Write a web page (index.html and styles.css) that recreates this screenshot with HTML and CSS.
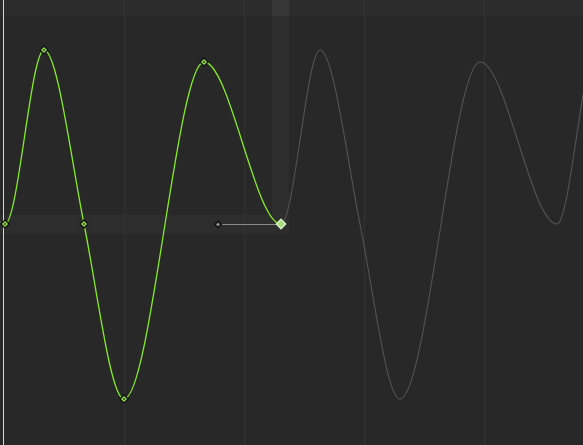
FILE: index.html
```html
<!DOCTYPE html>
<html>
<head>
  <title>Curve Editor</title>
  <link rel="stylesheet" href="styles.css">
</head>
<body>
  <div class="curve-editor">
    <svg class="curve-canvas" width="583" height="445" viewBox="0 0 583 445">
      <!-- timeline strip -->
      <rect class="ruler" x="0" y="0" width="583" height="16"/>

      <!-- selected key cross-hair bands -->
      <rect class="band" x="0" y="215" width="272" height="19"/>
      <rect class="band" x="272" y="16" width="17" height="218"/>
      <rect class="band-top" x="272" y="0" width="17" height="16"/>

      <!-- grid -->
      <g class="grid">
        <line x1="124.5" y1="0" x2="124.5" y2="445"/>
        <line x1="244.5" y1="0" x2="244.5" y2="445"/>
        <line x1="364.5" y1="0" x2="364.5" y2="445"/>
        <line x1="484.5" y1="0" x2="484.5" y2="445"/>
      </g>
      <line class="start-line" x1="3.5" y1="0" x2="3.5" y2="445"/>

      <!-- looped copies of the curve -->
      <g class="ghost">
        <path d="M-271 224 C-258 224 -245 50 -232 50 C-218.7 50 -205.3 157 -192 224 C-178.7 290.7 -165.3 399 -152 399 C-125.3 399 -98.7 62 -72 62 C-46.3 62 -20.7 224 5 224"/>
        <path d="M281 224 C294 224 307 50 320 50 C333.3 50 346.7 157 360 224 C373.3 290.7 386.7 399 400 399 C426.7 399 453.3 62 480 62 C505.7 62 531.3 224 557 224"/>
        <path d="M557 224 C570 224 583 50 596 50"/>
      </g>

      <!-- curve -->
      <path class="curve" d="M5 224 C18 224 31 50 44 50 C57.3 50 70.7 157 84 224 C97.3 290.7 110.7 399 124 399 C150.7 399 177.3 62 204 62 C229.7 62 255.3 224 281 224"/>

      <!-- tangent handle -->
      <line class="handle-line" x1="218" y1="224.5" x2="281" y2="224.5"/>
      <g class="handle" transform="translate(218 224.5)">
        <rect x="-3" y="-3" width="6" height="6" transform="rotate(45)" class="key-edge"/>
        <rect x="-1.5" y="-1.5" width="3" height="3" transform="rotate(45)" class="handle-fill"/>
      </g>

      <!-- keys -->
      <g class="key" transform="translate(5 224)"><rect x="-3.5" y="-3.5" width="7" height="7" transform="rotate(45)" class="key-edge"/><rect x="-2.2" y="-2.2" width="4.4" height="4.4" transform="rotate(45)" class="key-fill"/><circle r="1" class="key-dot"/></g>
      <g class="key" transform="translate(44 50)"><rect x="-3.5" y="-3.5" width="7" height="7" transform="rotate(45)" class="key-edge"/><rect x="-2.2" y="-2.2" width="4.4" height="4.4" transform="rotate(45)" class="key-fill"/><circle r="1" class="key-dot"/></g>
      <g class="key" transform="translate(84 224)"><rect x="-3.5" y="-3.5" width="7" height="7" transform="rotate(45)" class="key-edge"/><rect x="-2.2" y="-2.2" width="4.4" height="4.4" transform="rotate(45)" class="key-fill"/><circle r="1" class="key-dot"/></g>
      <g class="key" transform="translate(124 399)"><rect x="-3.5" y="-3.5" width="7" height="7" transform="rotate(45)" class="key-edge"/><rect x="-2.2" y="-2.2" width="4.4" height="4.4" transform="rotate(45)" class="key-fill"/><circle r="1" class="key-dot"/></g>
      <g class="key" transform="translate(204 62)"><rect x="-3.5" y="-3.5" width="7" height="7" transform="rotate(45)" class="key-edge"/><rect x="-2.2" y="-2.2" width="4.4" height="4.4" transform="rotate(45)" class="key-fill"/><circle r="1" class="key-dot"/></g>

      <!-- selected key -->
      <g class="key-selected" transform="translate(281 224)">
        <rect x="-4" y="-4" width="8" height="8" transform="rotate(45)" class="selected-edge"/>
        <rect x="-2.6" y="-2.6" width="5.2" height="5.2" transform="rotate(45)" class="selected-fill"/>
      </g>
    </svg>
  </div>
</body>
</html>
```

FILE: styles.css
```css
body {
  margin: 0;
  background: #282828;
  overflow: hidden;
}

.curve-editor {
  width: 583px;
  height: 445px;
  background: #282828;
}

.curve-canvas {
  display: block;
}

.ruler {
  fill: #2c2c2c;
}

.band {
  fill: #2d2d2d;
}

.band-top {
  fill: #373737;
}

.grid line {
  stroke: #323232;
  stroke-width: 1;
}

.start-line {
  stroke: #d6d6d6;
  stroke-width: 1;
}

.ghost path {
  fill: none;
  stroke: #545454;
  stroke-width: 1.1;
}

.curve {
  fill: none;
  stroke: #84ec22;
  stroke-width: 1.3;
}

.handle-line {
  stroke: #8a8a8a;
  stroke-width: 1;
}

.key-edge {
  fill: #121212;
}

.handle-fill {
  fill: #8e8e8e;
}

.key-fill {
  fill: #8fd94a;
}

.key-dot {
  fill: #2d4a14;
}

.selected-edge {
  fill: #d8f0c8;
}

.selected-fill {
  fill: #a6de7e;
}
```
